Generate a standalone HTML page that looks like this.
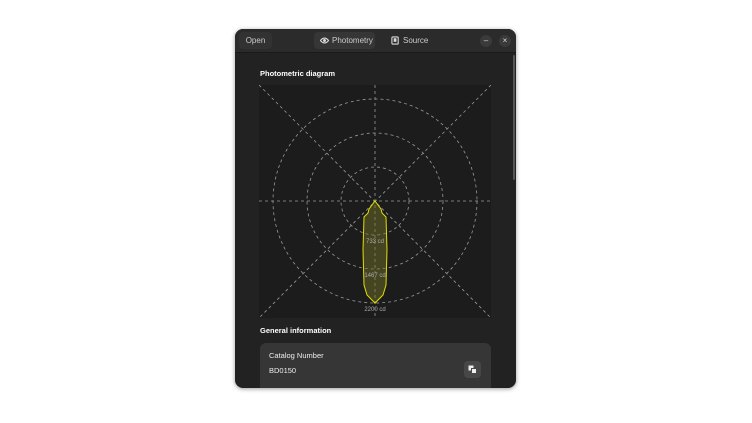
<!DOCTYPE html>
<html><head><style>
body{margin:0;width:752px;height:423px;background:#fff;position:relative;overflow:hidden;font-family:"Liberation Sans",sans-serif}
.win{position:absolute;left:235px;top:29px;width:281px;height:359px;background:#222;border-radius:8px;overflow:hidden;box-shadow:0 1px 4px rgba(0,0,0,.4)}
.hdr{position:absolute;left:0;top:0;width:281px;height:23px;background:#2b2b2b;border-bottom:1px solid #1a1a1a}
.btn{position:absolute;top:3px;height:17px;border-radius:4px;color:#ccc;font-size:8px;line-height:17px}
.t{position:absolute;color:#fff;font-size:7.5px;font-weight:bold}
.circ{position:absolute;top:6px;width:12px;height:12px;border-radius:6px;background:#3a3a3a;color:#ddd;font-size:8px;line-height:12px;text-align:center}
</style></head><body>
<div class="win">
<div class="hdr">
<div class="btn" style="left:4px;width:33px;background:#323232;text-align:center">Open</div>
<div class="btn" style="left:79px;width:61px;background:#363636"><svg style="position:absolute;left:6px;top:4px" width="9" height="9" viewBox="0 0 10 10"><path d="M0.5 5Q5 -0.5 9.5 5Q5 10.5 0.5 5Z" fill="none" stroke="#ddd" stroke-width="1.2"/><circle cx="5" cy="5" r="1.6" fill="#ddd"/></svg><span style="position:absolute;left:18px">Photometry</span></div>
<div class="btn" style="left:150px;width:50px"><svg style="position:absolute;left:6px;top:4px" width="9" height="9" viewBox="0 0 10 10"><rect x="1" y="1" width="7" height="8" rx="1" fill="none" stroke="#ddd" stroke-width="1.2"/><rect x="3" y="2.5" width="3" height="4" fill="#ddd"/></svg><span style="position:absolute;left:18px">Source</span></div>
<div class="circ" style="left:245px">–</div>
<div class="circ" style="left:264px">×</div>
</div>
<div style="position:absolute;left:278px;top:26px;width:2px;height:125px;background:#555;border-radius:1px"></div>
<div class="t" style="left:25px;top:40px">Photometric diagram</div>
<svg style="position:absolute;left:24px;top:56px" width="232" height="233" viewBox="259 85 232 233">
<rect x="259" y="85" width="232" height="233" fill="#1c1c1c"/>
<g stroke="#999" stroke-width="0.8" stroke-dasharray="3,3" fill="none">
<line x1="259" y1="85" x2="491" y2="318"/><line x1="491" y1="85" x2="259" y2="318"/>
<line x1="375" y1="85" x2="375" y2="318"/><line x1="259" y1="201" x2="491" y2="201"/>
<circle cx="375" cy="201" r="34"/><circle cx="375" cy="201" r="68"/><circle cx="375" cy="201" r="102"/>
</g>
<path d="M375 201L381 209L382 213L386 217L387 250L386 285L383 295L375 303L367 295L364 285L363 250L364 217L368 213L369 209Z" fill="rgba(120,120,40,0.45)" stroke="#e0e000" stroke-width="1"/>
<g fill="#aaa" font-size="6" text-anchor="middle" font-family="Liberation Sans,sans-serif">
<text x="375" y="243">733 cd</text><text x="375" y="277">1467 cd</text><text x="375" y="311">2200 cd</text></g>
</svg>
<div class="t" style="left:25px;top:297px">General information</div>
<div style="position:absolute;left:25px;top:314px;width:231px;height:60px;background:#363636;border-radius:6px">
<div class="t" style="left:9px;top:8px;font-weight:normal;color:#eee">Catalog Number</div>
<div style="position:absolute;left:9px;top:23px;color:#eee;font-size:7.5px">BD0150</div>
<div style="position:absolute;left:204px;top:18px;width:17px;height:17px;background:#474747;border-radius:4px"><svg style="position:absolute;left:4px;top:4px" width="9" height="9"><rect x="0.5" y="0.5" width="5" height="5" fill="#eee"/><rect x="3.5" y="3.5" width="5" height="5" fill="#eee" stroke="#474747"/></svg></div>
</div>
</div>
</body></html>
